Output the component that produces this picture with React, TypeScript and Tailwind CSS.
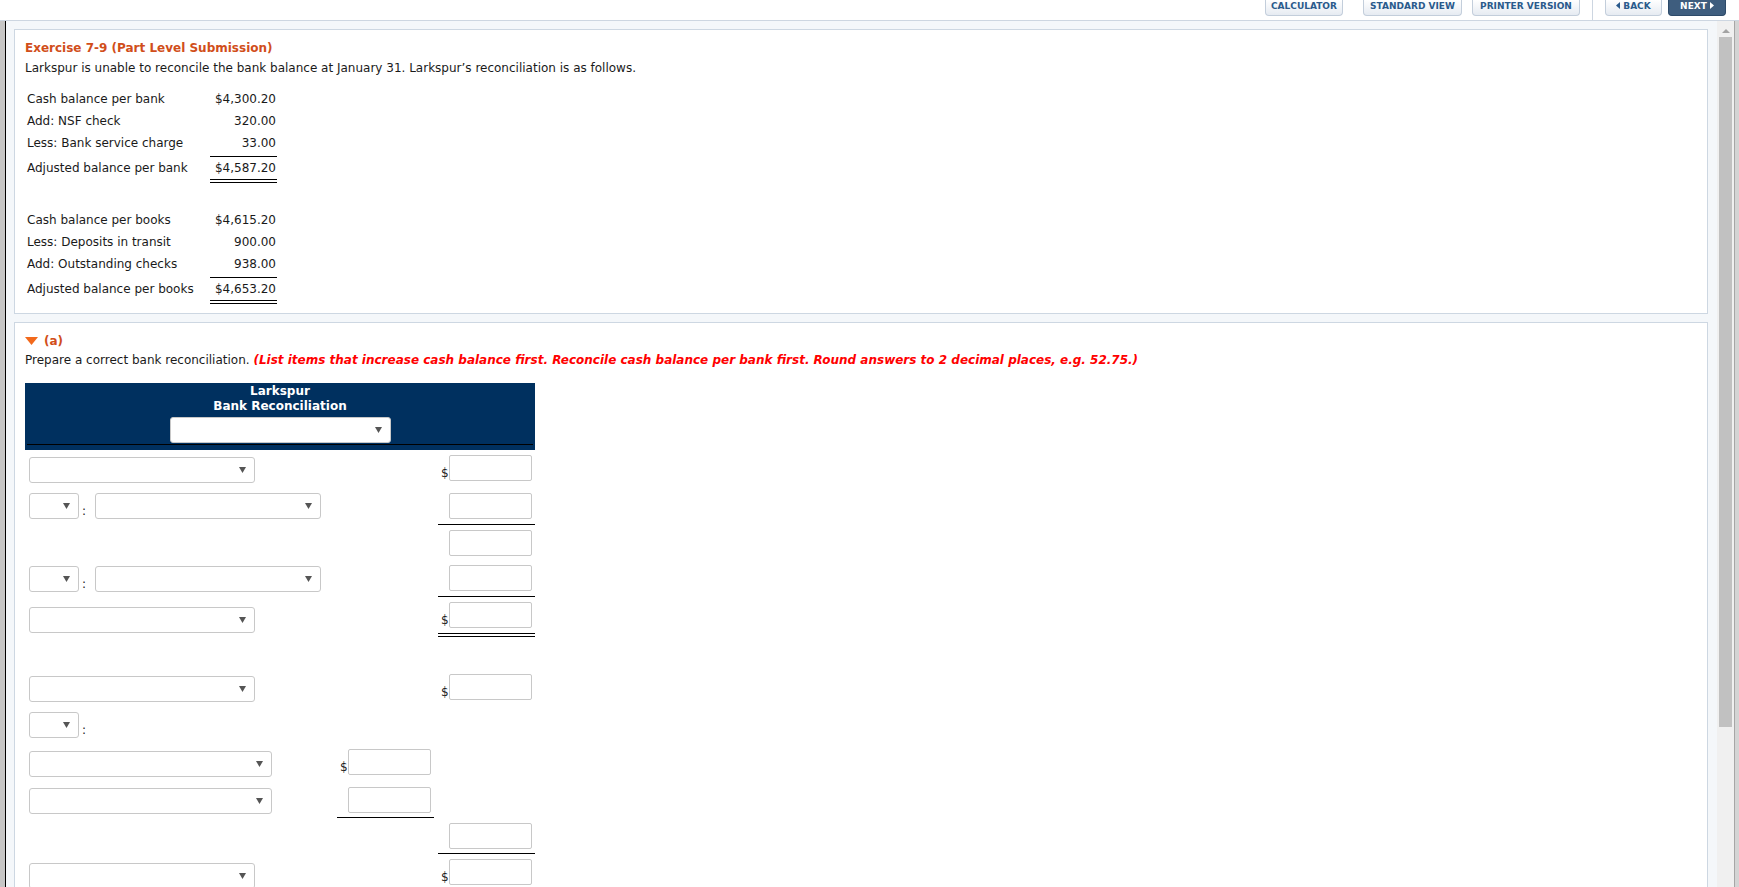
import React from "react";

function Arrow() {
  return (
    <svg width="7" height="6" viewBox="0 0 7 6" className="shrink-0">
      <polygon points="0,0 7,0 3.5,6" fill="#555555" />
    </svg>
  );
}

function Sel({ className }: { className: string }) {
  return (
    <div
      className={
        "flex h-[26px] shrink-0 items-center justify-end rounded-[3px] border border-[#c8c8c8] bg-white pr-[8px] " +
        className
      }
    >
      <Arrow />
    </div>
  );
}

function Inp() {
  return <div className="h-[26px] w-[83px] shrink-0 rounded-[2px] border border-[#c8c8c8] bg-white" />;
}

function Dollar() {
  return (
    <span className="flex h-[26px] w-[11px] shrink-0 items-end pb-[2px] pl-[3px] text-[12px] leading-none text-[#222]">
      $
    </span>
  );
}

function Gap() {
  return <span className="w-[11px] shrink-0" />;
}

function Colon() {
  return (
    <span className="flex h-[26px] w-[16px] shrink-0 items-end pb-[2px] pl-[3px] text-[12px] leading-none text-[#222]">
      :
    </span>
  );
}

function TopBtn({ children, className }: { children: React.ReactNode; className: string }) {
  return (
    <div
      className={
        "flex h-[16px] shrink-0 items-start justify-center rounded-b-[4px] border border-t-0 pt-[1px] text-[9px] font-bold leading-[10px] " +
        className
      }
    >
      {children}
    </div>
  );
}

function Row({ label, amount, line }: { label: string; amount: string; line?: "single" | "double" }) {
  if (line === "single") {
    return (
      <div className="flex h-[25px] items-start">
        <span className="w-[185px] pl-[2px] leading-[22px]">{label}</span>
        <span className="h-[25px] w-[67px] border-b border-black pr-[1px] text-right leading-[22px]">{amount}</span>
      </div>
    );
  }
  if (line === "double") {
    return (
      <div className="flex h-[26px] items-start">
        <span className="w-[185px] pl-[2px] leading-[22px]">{label}</span>
        <div className="flex w-[67px] flex-col">
          <span className="h-[22px] pr-[1px] text-right leading-[22px]">{amount}</span>
          <div className="h-[4px] border-y border-black" />
        </div>
      </div>
    );
  }
  return (
    <div className="flex h-[22px] items-start">
      <span className="w-[185px] pl-[2px] leading-[22px]">{label}</span>
      <span className="w-[67px] pr-[1px] text-right leading-[22px]">{amount}</span>
    </div>
  );
}

export default function App() {
  return (
    <div className="relative flex h-[887px] w-[1739px] flex-col overflow-hidden bg-white font-['DejaVu_Sans',Verdana,sans-serif] text-[12px] text-[#1a1a1a]">
      {/* top bar */}
      <div className="flex h-[21px] shrink-0 items-start justify-end border-b border-[#cdd6e1] pr-[13px]">
        <TopBtn className="w-[78px] border-[#c3cedb] bg-gradient-to-b from-[#ffffff] to-[#e6ebf2] text-[#2a5a8c]">CALCULATOR</TopBtn>
        <TopBtn className="ml-[20px] w-[99px] border-[#c3cedb] bg-gradient-to-b from-[#ffffff] to-[#e6ebf2] text-[#2a5a8c]">STANDARD VIEW</TopBtn>
        <TopBtn className="ml-[10px] w-[108px] border-[#c3cedb] bg-gradient-to-b from-[#ffffff] to-[#e6ebf2] text-[#2a5a8c]">PRINTER VERSION</TopBtn>
        <div className="ml-[12px] h-[20px] w-px bg-[#cdd6e1]" />
        <TopBtn className="ml-[12px] w-[57px] gap-[3px] border-[#c3cedb] bg-gradient-to-b from-[#ffffff] to-[#e6ebf2] text-[#2a5a8c]">
          <svg width="4" height="7" viewBox="0 0 4 7" className="mt-[1px]">
            <polygon points="4,0 4,7 0,3.5" fill="#2a5a8c" />
          </svg>
          BACK
        </TopBtn>
        <TopBtn className="ml-[6px] w-[58px] gap-[3px] border-[#2d4a69] bg-[#3e5d7e] text-white">
          NEXT
          <svg width="4" height="7" viewBox="0 0 4 7" className="mt-[1px]">
            <polygon points="0,0 0,7 4,3.5" fill="#ffffff" />
          </svg>
        </TopBtn>
      </div>

      <div className="flex min-h-0 flex-1">
        <div className="w-[5px] shrink-0 bg-[#c6c6c6]" />
        <div className="w-px shrink-0 bg-black" />
        <div className="flex min-w-0 flex-1 bg-[#f4f7fa] pl-[8px] pt-[8px]">
          <div className="flex w-[1694px] shrink-0 flex-col gap-[8px]">
            {/* card 1 */}
            <div className="shrink-0 border border-[#cdd7e2] bg-white pb-[9px] pl-[10px] pt-[10px]">
              <div className="text-[12px] font-bold leading-[16px] text-[#d14e1a]">Exercise 7-9 (Part Level Submission)</div>
              <div className="mt-[4px] leading-[16px]">
                Larkspur is unable to reconcile the bank balance at January 31. Larkspur’s reconciliation is as follows.
              </div>
              <div className="mt-[12px]">
                <Row label="Cash balance per bank" amount="$4,300.20" />
                <Row label="Add: NSF check" amount="320.00" />
                <Row label="Less: Bank service charge" amount="33.00" line="single" />
                <Row label="Adjusted balance per bank" amount="$4,587.20" line="double" />
              </div>
              <div className="mt-[26px]">
                <Row label="Cash balance per books" amount="$4,615.20" />
                <Row label="Less: Deposits in transit" amount="900.00" />
                <Row label="Add: Outstanding checks" amount="938.00" line="single" />
                <Row label="Adjusted balance per books" amount="$4,653.20" line="double" />
              </div>
            </div>

            {/* card 2 */}
            <div className="min-h-[700px] shrink-0 border border-[#cdd7e2] bg-white pl-[10px] pt-[10px]">
              <div className="flex h-[16px] items-center">
                <svg width="13" height="8" viewBox="0 0 13 8">
                  <polygon points="0,0 13,0 6.5,8" fill="#f2691c" />
                </svg>
                <span className="ml-[6px] font-bold leading-[16px] text-[#d14e1a]">(a)</span>
              </div>
              <div className="mt-[4px] leading-[15px]">
                Prepare a correct bank reconciliation.{" "}
                <span className="font-bold italic text-[#ff0000]">
                  (List items that increase cash balance first. Reconcile cash balance per bank first. Round answers to 2 decimal places, e.g. 52.75.)
                </span>
              </div>

              <div className="mt-[15px] w-[510px]">
                {/* header */}
                <div className="flex flex-col items-center bg-[#00305f] pt-[1px] pb-[5px] font-bold text-white">
                  <div className="leading-[15px]">Larkspur</div>
                  <div className="leading-[15px]">Bank Reconciliation</div>
                  <Sel className="mt-[3px] w-[221px]" />
                  <div className="mt-px h-px w-[506px] bg-black" />
                </div>

                {/* B1 */}
                <div className="flex h-[39px]">
                  <div className="w-[312px] shrink-0 pl-[4px] pt-[7px]"><Sel className="w-[226px]" /></div>
                  <div className="w-[97px] shrink-0" />
                  <div className="ml-[4px] flex w-[97px] shrink-0 pt-[5px]"><Dollar /><Inp /></div>
                </div>
                {/* B2 */}
                <div className="flex h-[36px]">
                  <div className="flex w-[312px] shrink-0 items-start pl-[4px] pt-[4px]"><Sel className="w-[50px]" /><Colon /><Sel className="w-[226px]" /></div>
                  <div className="w-[97px] shrink-0" />
                  <div className="ml-[4px] flex h-[36px] w-[97px] shrink-0 border-b border-black pt-[4px]"><Gap /><Inp /></div>
                </div>
                {/* B3 */}
                <div className="flex h-[36px]">
                  <div className="w-[312px] shrink-0" />
                  <div className="w-[97px] shrink-0" />
                  <div className="ml-[4px] flex w-[97px] shrink-0 pt-[5px]"><Gap /><Inp /></div>
                </div>
                {/* B4 */}
                <div className="flex h-[36px]">
                  <div className="flex w-[312px] shrink-0 items-start pl-[4px] pt-[5px]"><Sel className="w-[50px]" /><Colon /><Sel className="w-[226px]" /></div>
                  <div className="w-[97px] shrink-0" />
                  <div className="ml-[4px] flex h-[36px] w-[97px] shrink-0 border-b border-black pt-[4px]"><Gap /><Inp /></div>
                </div>
                {/* B5 */}
                <div className="flex h-[40px]">
                  <div className="w-[312px] shrink-0 pl-[4px] pt-[10px]"><Sel className="w-[226px]" /></div>
                  <div className="w-[97px] shrink-0" />
                  <div className="ml-[4px] flex w-[97px] shrink-0 flex-col">
                    <div className="flex h-[36px] pt-[5px]"><Dollar /><Inp /></div>
                    <div className="h-[4px] border-y border-black" />
                  </div>
                </div>
                <div className="h-[33px]" />
                {/* B6 */}
                <div className="flex h-[36px]">
                  <div className="w-[312px] shrink-0 pl-[4px] pt-[6px]"><Sel className="w-[226px]" /></div>
                  <div className="w-[97px] shrink-0" />
                  <div className="ml-[4px] flex w-[97px] shrink-0 pt-[4px]"><Dollar /><Inp /></div>
                </div>
                {/* B7 */}
                <div className="flex h-[39px]">
                  <div className="flex w-[312px] shrink-0 items-start pl-[4px] pt-[6px]"><Sel className="w-[50px]" /><Colon /></div>
                </div>
                {/* B8 */}
                <div className="flex h-[36px]">
                  <div className="w-[312px] shrink-0 pl-[4px] pt-[6px]"><Sel className="w-[243px]" /></div>
                  <div className="flex w-[97px] shrink-0 pt-[4px]"><Dollar /><Inp /></div>
                </div>
                {/* B9 */}
                <div className="flex h-[37px]">
                  <div className="w-[312px] shrink-0 pl-[4px] pt-[7px]"><Sel className="w-[243px]" /></div>
                  <div className="flex h-[37px] w-[97px] shrink-0 border-b border-black pt-[6px]"><Gap /><Inp /></div>
                </div>
                {/* B10 */}
                <div className="flex h-[36px]">
                  <div className="w-[312px] shrink-0" />
                  <div className="w-[97px] shrink-0" />
                  <div className="ml-[4px] flex h-[36px] w-[97px] shrink-0 border-b border-black pt-[5px]"><Gap /><Inp /></div>
                </div>
                {/* B11 */}
                <div className="flex h-[40px]">
                  <div className="w-[312px] shrink-0 pl-[4px] pt-[9px]"><Sel className="w-[226px]" /></div>
                  <div className="w-[97px] shrink-0" />
                  <div className="ml-[4px] flex w-[97px] shrink-0 pt-[5px]"><Dollar /><Inp /></div>
                </div>
              </div>
            </div>
          </div>

          <div className="w-[9px] shrink-0" />
          {/* scrollbar */}
          <div className="-mt-[8px] flex w-[17px] shrink-0 flex-col items-center bg-[#f0f0f0]">
            <svg width="8" height="4" viewBox="0 0 8 4" className="mt-[8px]">
              <polygon points="0,4 8,4 4,0" fill="#a3a3a3" />
            </svg>
            <div className="mt-[4px] h-[690px] w-[13px] bg-[#c1c1c1]" />
          </div>
          <div className="-mt-[8px] w-px shrink-0 bg-[#a6a6a6]" />
          <div className="-mt-[8px] w-[4px] shrink-0 bg-[#d4d4d4]" />
        </div>
      </div>
    </div>
  );
}
